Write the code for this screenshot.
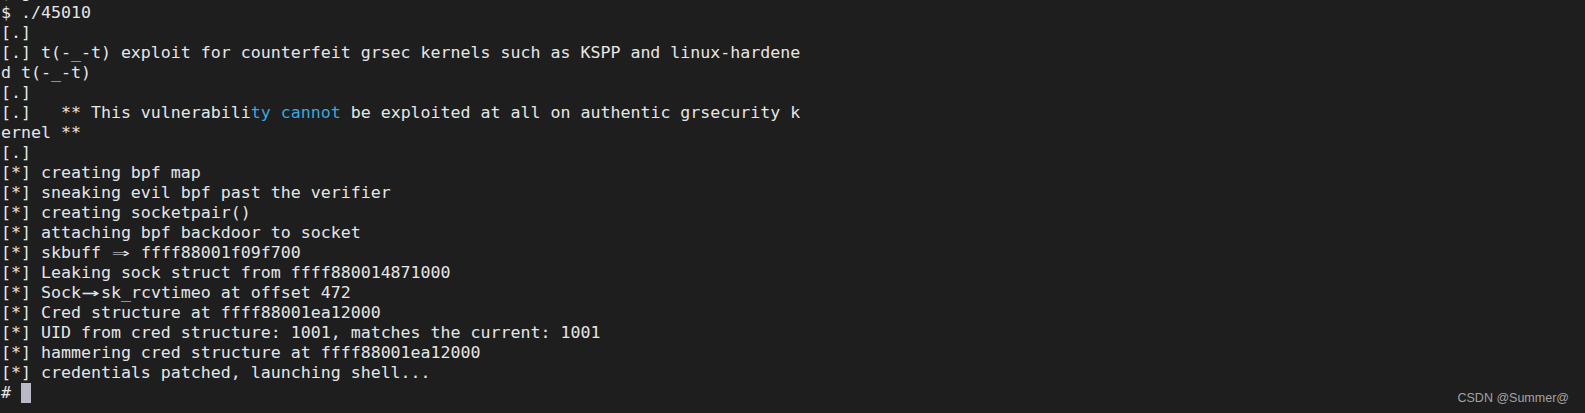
const lines: React.ReactNode[] = [
  "$ gcc -o 45010 45010.c",
  "$ ./45010",
  "[.] ",
  "[.] t(-_-t) exploit for counterfeit grsec kernels such as KSPP and linux-hardene",
  "d t(-_-t)",
  "[.] ",
  <>
    [.]   ** This vulnerabili<span className="text-[#3ea6dd]">ty cannot</span> be exploited at all on authentic grsecurity k
  </>,
  "ernel **",
  "[.] ",
  "[*] creating bpf map",
  "[*] sneaking evil bpf past the verifier",
  "[*] creating socketpair()",
  "[*] attaching bpf backdoor to socket",
  <>
    [*] skbuff <Lig>⇒</Lig> ffff88001f09f700
  </>,
  "[*] Leaking sock struct from ffff880014871000",
  <>
    [*] Sock<Lig>→</Lig>sk_rcvtimeo at offset 472
  </>,
  "[*] Cred structure at ffff88001ea12000",
  "[*] UID from cred structure: 1001, matches the current: 1001",
  "[*] hammering cred structure at ffff88001ea12000",
  "[*] credentials patched, launching shell...",
  <>
    # <span className="inline-block w-[10px] h-[20px] align-top bg-[#b9b9c8]" />
  </>,
]

// "=>" / "->" ligatures span two cells
function Lig({ children }: { children: React.ReactNode }) {
  return (
    <span className="inline-block w-[20px] text-center align-top">
      <span className="inline-block scale-x-[1.8]">{children}</span>
    </span>
  )
}

export default function App() {
  return (
    <div className="relative h-[413px] w-[1585px] overflow-hidden bg-[#1e1e1e]">
      <div
        className="-mt-[17px] pl-[1px] text-[16.6px] leading-[20px] text-[#e6e6e6] whitespace-pre"
        style={{ fontFamily: '"DejaVu Sans Mono", "Liberation Mono", monospace' }}
      >
        {lines.map((l, i) => (
          <div key={i} className="h-[20px]">
            {l}
          </div>
        ))}
      </div>
      <div
        className="absolute right-[16px] bottom-[9px] text-[12.5px] leading-none text-[#a3a3a3]"
        style={{ fontFamily: '"Liberation Sans", Arial, sans-serif' }}
      >
        CSDN @Summer@
      </div>
    </div>
  )
}
